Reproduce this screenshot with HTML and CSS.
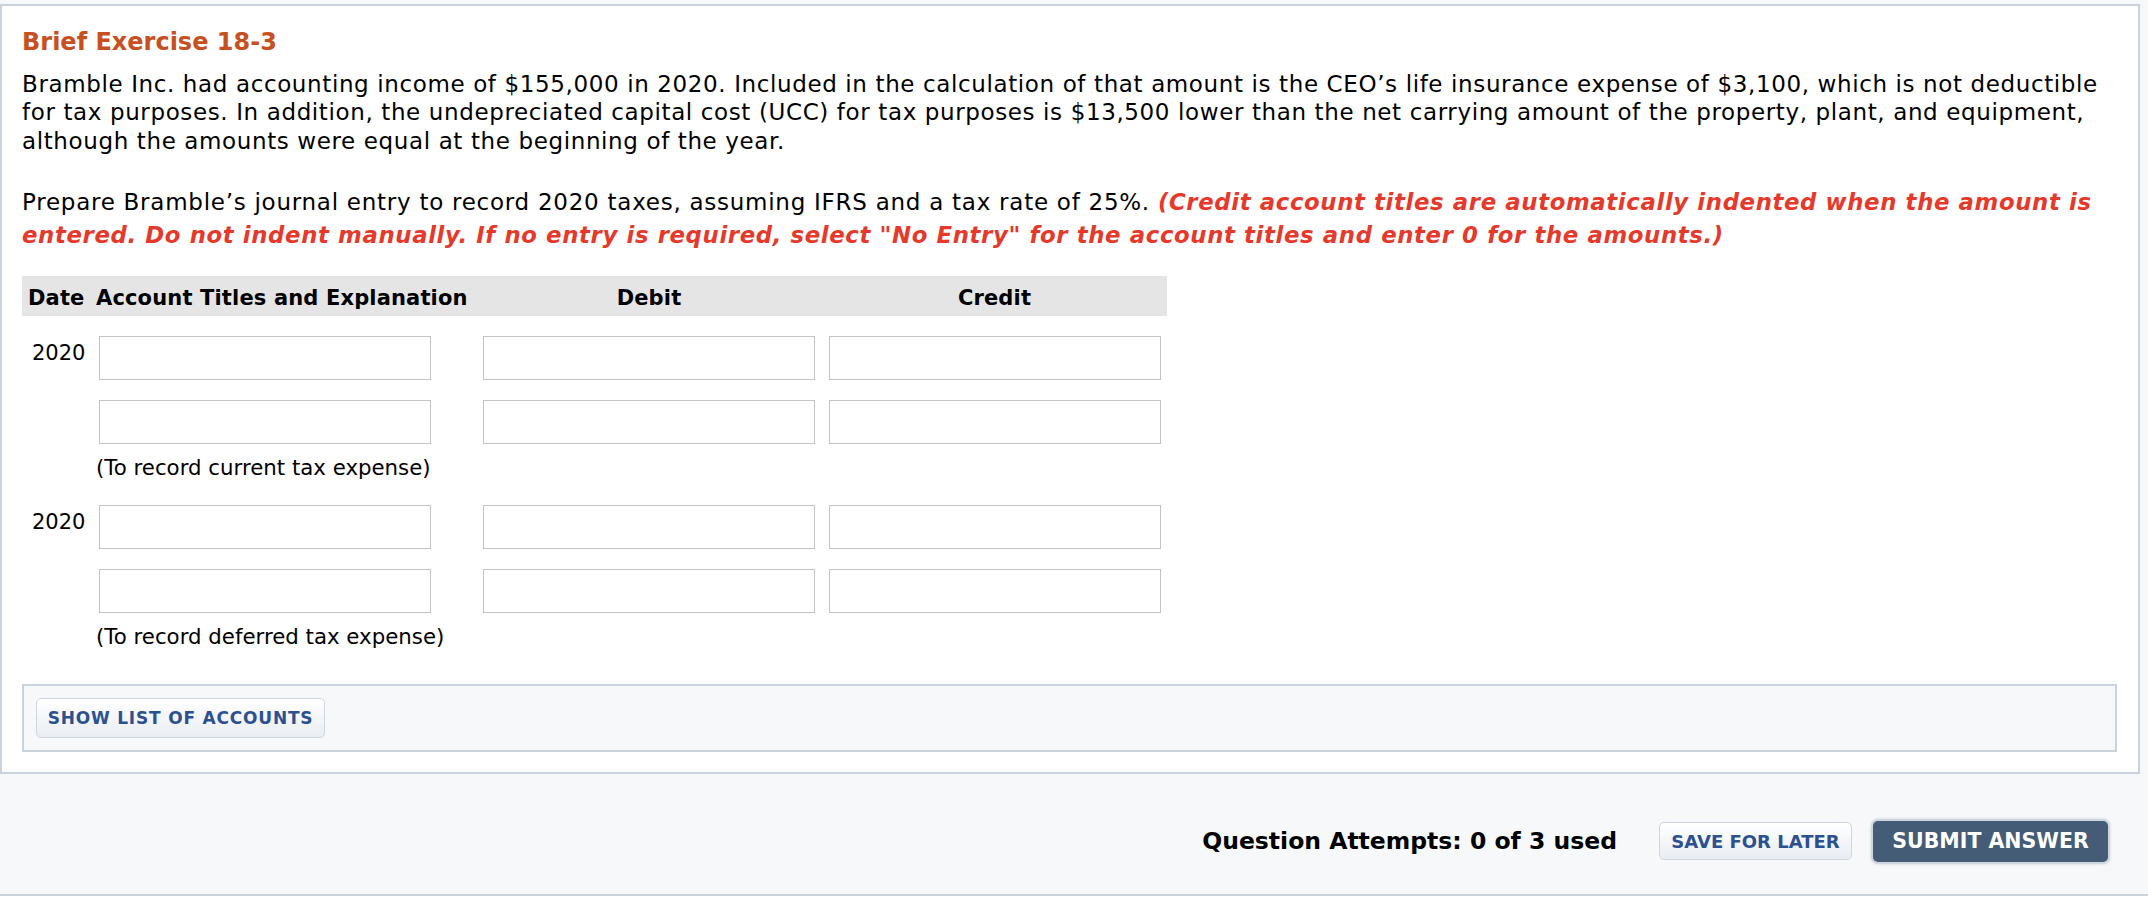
FILE: index.html
```html
<!DOCTYPE html>
<html lang="en">
<head>
  <meta charset="UTF-8" />
  <title>Brief Exercise 18-3</title>
  <link rel="stylesheet" href="styles.css">
</head>
<body>
  <div class="page">
    <div class="question-panel">
      <h2 class="question-title">Brief Exercise 18-3</h2>
      <p class="question-text">Bramble Inc. had accounting income of $155,000 in 2020. Included in the calculation of that amount is the CEO’s life insurance expense of $3,100, which is not deductible for tax purposes. In addition, the undepreciated capital cost (UCC) for tax purposes is $13,500 lower than the net carrying amount of the property, plant, and equipment, although the amounts were equal at the beginning of the year.</p>
      <p class="question-text instructions">Prepare Bramble’s journal entry to record 2020 taxes, assuming IFRS and a tax rate of 25%. <strong class="note">(Credit account titles are automatically indented when the amount is entered. Do not indent manually. If no entry is required, select "No Entry" for the account titles and enter 0 for the amounts.)</strong></p>

      <div class="journal">
        <div class="journal-head">
          <div class="col-date">Date</div>
          <div class="col-account">Account Titles and Explanation</div>
          <div class="col-amount">Debit</div>
          <div class="col-amount">Credit</div>
        </div>

        <div class="entry">
          <div class="entry-row">
            <div class="cell-date">2020</div>
            <div class="cell-account"><input type="text"></div>
            <div class="cell-amount"><input type="text"></div>
            <div class="cell-amount"><input type="text"></div>
          </div>
          <div class="entry-row">
            <div class="cell-date"></div>
            <div class="cell-account"><input type="text"></div>
            <div class="cell-amount"><input type="text"></div>
            <div class="cell-amount"><input type="text"></div>
          </div>
          <div class="entry-note">(To record current tax expense)</div>
        </div>

        <div class="entry">
          <div class="entry-row">
            <div class="cell-date">2020</div>
            <div class="cell-account"><input type="text"></div>
            <div class="cell-amount"><input type="text"></div>
            <div class="cell-amount"><input type="text"></div>
          </div>
          <div class="entry-row">
            <div class="cell-date"></div>
            <div class="cell-account"><input type="text"></div>
            <div class="cell-amount"><input type="text"></div>
            <div class="cell-amount"><input type="text"></div>
          </div>
          <div class="entry-note">(To record deferred tax expense)</div>
        </div>
      </div>

      <div class="accounts-box">
        <button class="btn btn-light btn-accounts">SHOW LIST OF ACCOUNTS</button>
      </div>
    </div>

    <div class="question-footer">
      <span class="attempts">Question Attempts: 0 of 3 used</span>
      <button class="btn btn-light btn-save">SAVE FOR LATER</button>
      <button class="btn btn-dark">SUBMIT ANSWER</button>
    </div>
  </div>
</body>
</html>
```

FILE: styles.css
```css
body {
  margin: 0;
  background: #fff;
  font-family: "DejaVu Sans", Verdana, sans-serif;
  color: #000;
}
.page {
  background: #f6f8fa;
  padding-top: 4px;
  border-bottom: 2px solid #cad3dc;
}
.question-panel {
  background: #fff;
  border: 2px solid #cad3dc;
  margin-right: 8px;
  padding: 21px 21px 20px 20px;
}
.question-title {
  margin: 0 0 13px;
  font-size: 24px;
  line-height: 30px;
  font-weight: bold;
  color: #c6501f;
}
.question-text {
  margin: 0;
  font-size: 23px;
  letter-spacing: 0.62px;
  line-height: 28.3px;
}
.instructions {
  margin-top: 31px;
  line-height: 33px;
  letter-spacing: 0.74px;
}
.note {
  color: #e5392b;
  font-style: italic;
  font-size: 22.8px;
  letter-spacing: 0.62px;
}

/* journal entry table */
.journal {
  width: 1145px;
  margin-top: 24px;
}
.journal-head,
.entry-row {
  display: grid;
  grid-template-columns: 74px 380px 346px 345px;
}
.journal-head {
  height: 40px;
  padding-top: 4px;
  box-sizing: border-box;
  align-items: center;
  background: #e5e5e5;
  font-weight: bold;
  font-size: 21px;
  letter-spacing: 0.15px;
}
.col-date {
  padding-left: 6px;
}
.col-amount {
  text-align: center;
}
.entry-row {
  margin-top: 20px;
}
.entry:first-of-type .entry-row:first-child {
  margin-top: 18px;
}
.entry + .entry {
  margin-top: 23px;
}
.cell-date {
  padding: 3px 0 0 10px;
  font-size: 21px;
  line-height: 28px;
}
.cell-account input {
  margin-left: 3px;
}
.cell-amount {
  display: flex;
  justify-content: center;
}
.entry-row input {
  width: 332px;
  height: 44px;
  box-sizing: border-box;
  border: 1px solid #c3c3c3;
  margin-top: 0;
  margin-bottom: 0;
  padding: 0 8px;
  font-family: inherit;
  font-size: 20px;
  background: #fff;
}
.entry-note {
  margin: 10px 0 0 74px;
  font-size: 21.3px;
  line-height: 28px;
}

.accounts-box {
  margin-top: 33px;
  background: #f6f8fa;
  border: 2px solid #cad3dc;
  padding: 12px;
}

/* buttons */
.btn {
  font-family: inherit;
  font-weight: bold;
  border-radius: 5px;
  cursor: pointer;
  box-sizing: border-box;
}
.btn-light {
  background: linear-gradient(#ffffff, #e9edf2);
  border: 1px solid #cdd6e0;
  color: #2d5190;
}
.btn-accounts {
  width: 289px;
  height: 40px;
  font-size: 17px;
  letter-spacing: 0.8px;
  padding: 0;
}
.btn-save {
  width: 193px;
  height: 38px;
  font-size: 18px;
  padding: 0;
}
.btn-dark {
  width: 235px;
  height: 41px;
  padding: 0;
  font-size: 20.5px;
  color: #fff;
  background: #445c76;
  border: none;
  box-shadow: 0 0 0 2px #cdd5de, 0 0 3px 2px #cdd5de;
}

.question-footer {
  display: flex;
  justify-content: flex-end;
  align-items: center;
  padding: 47px 40px 32px 0;
}
.attempts {
  font-weight: bold;
  font-size: 23.5px;
  margin-right: 42px;
}
.btn-save {
  margin-right: 21px;
}
```
